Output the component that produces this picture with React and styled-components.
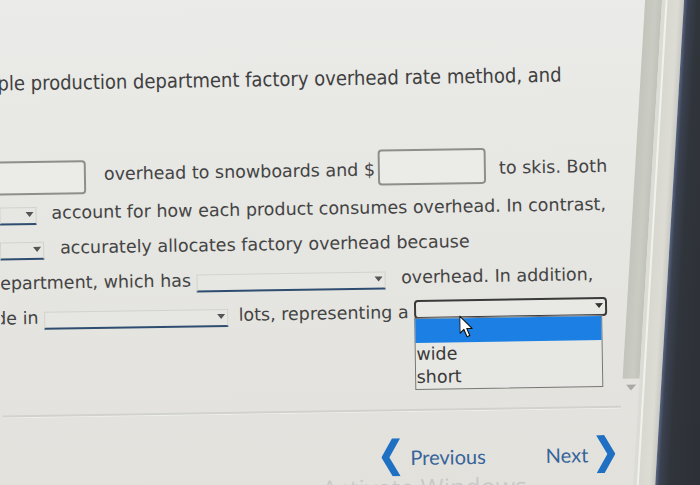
import styled, { createGlobalStyle } from "styled-components";

const GlobalStyle = createGlobalStyle`
  html, body {
    margin: 0;
    padding: 0;
    background: #e4e3df;
  }
  body {
    width: 700px;
    height: 485px;
    overflow: hidden;
  }
`;

const pageBg = "linear-gradient(180deg, #ebebe9 0%, #e6e6e2 45%, #e2e1dc 100%)";

const Viewport = styled.div`
  width: 700px;
  height: 485px;
  overflow: hidden;
`;

const Screen = styled.div`
  display: flex;
  width: 730px;
  height: 505px;
  margin: -10px 0 0 -10px;
  background: ${pageBg};
  transform: rotate(-0.9deg);
  transform-origin: 360px 252px;
`;

const Main = styled.div`
  display: flex;
  flex-direction: column;
  width: 642px;
  flex-shrink: 0;
  padding: 10px 0 0 10px;
  box-sizing: border-box;
  background: ${pageBg};
`;

const Content = styled.div`
  height: 410px;
  padding-top: 60px;
  box-sizing: border-box;
  overflow: hidden;
  font-family: "DejaVu Sans", Verdana, sans-serif;
  font-size: 17.5px;
  color: #444;
`;

const Lead = styled.div`
  height: 35px;
  display: flex;
  align-items: center;
  font-family: "DejaVu Sans Condensed", "DejaVu Sans", sans-serif;
  font-stretch: condensed;
  font-size: 20px;
  color: #404040;
  white-space: nowrap;
  margin-bottom: 54px;
`;

const Row = styled.div`
  height: ${(p) => p.$h || 35}px;
  display: flex;
  align-items: center;
  white-space: nowrap;
`;

const Text = styled.span`
  margin-left: ${(p) => p.$ml || 0}px;
`;

const Box = styled.div`
  width: ${(p) => p.$w}px;
  height: ${(p) => p.$ht}px;
  margin-left: ${(p) => p.$ml || 0}px;
  margin-top: ${(p) => p.$mt || 0}px;
  border: 2px solid #8e8e8c;
  border-radius: 4px;
  background: #ebebe8;
  box-sizing: border-box;
  flex-shrink: 0;
`;

const Select = styled.div`
  position: relative;
  width: ${(p) => p.$w}px;
  height: 18px;
  margin-left: ${(p) => p.$ml || 0}px;
  margin-top: 6px;
  border: 1px solid #d3d3ce;
  border-bottom: 2px solid #2f4d70;
  box-sizing: border-box;
  background: #e6e6e2;
  flex-shrink: 0;
`;

const Arrow = styled.span`
  position: absolute;
  right: 2px;
  top: 4px;
  width: 0;
  height: 0;
  border-left: 4px solid transparent;
  border-right: 4px solid transparent;
  border-top: 5px solid ${(p) => p.$c || "#555"};
`;

const OpenSelect = styled.div`
  position: relative;
  width: 193px;
  height: 19px;
  margin-left: 5px;
  margin-top: -4px;
  border: 2px solid #3a3a3a;
  border-radius: 4px;
  box-sizing: border-box;
  background: #e8e8e4;
  flex-shrink: 0;
`;

const ListBox = styled.div`
  position: absolute;
  top: 16px;
  left: -2px;
  width: 188px;
  height: 72px;
  border: 1px solid #777;
  box-sizing: border-box;
  background: #e7e7e3;
  z-index: 2;
`;

const Option = styled.div`
  height: ${(p) => (p.$active ? 24 : 23)}px;
  line-height: 23px;
  padding-left: 1px;
  background: ${(p) => (p.$active ? "#1b7fe3" : "transparent")};
  color: #3a3a3a;
  font-size: 17.5px;
`;

const Cursor = styled.svg`
  position: absolute;
  left: 43px;
  top: 14px;
  z-index: 3;
`;

const Divider = styled.div`
  height: 2px;
  background: #d2d2cd;
  border-bottom: 1px solid #efefec;
`;

const Footer = styled.div`
  position: relative;
  flex: 1;
  display: flex;
  align-items: flex-start;
  padding: 25px 0 0 378px;
  overflow: hidden;
`;

const NavButton = styled.div`
  display: flex;
  align-items: center;
  gap: ${(p) => p.$gap}px;
  height: 40px;
  margin-left: ${(p) => p.$ml || 0}px;
  font-family: Lato, "Open Sans", sans-serif;
  font-size: 20px;
  color: #37649a;
`;

const Watermark = styled.div`
  position: absolute;
  left: 318px;
  top: 58px;
  font-family: "Open Sans", sans-serif;
  font-size: 25px;
  color: rgba(110, 118, 128, 0.22);
  white-space: nowrap;
`;

const RightEdge = styled.div`
  display: flex;
  flex: 1;
  margin-left: -20px;
  transform: skewX(-4.3deg);
  transform-origin: 0 100%;
`;

const ScrollBar = styled.div`
  width: 17px;
  display: flex;
  flex-direction: column;
  background: ${pageBg};
`;

const Thumb = styled.div`
  height: 393px;
  background: linear-gradient(90deg, #c3c4bb, #cacbc3 60%, #c1c2b9);
`;

const DownArrow = styled.div`
  margin: 6px auto 0;
  width: 0;
  height: 0;
  border-left: 5px solid transparent;
  border-right: 5px solid transparent;
  border-top: 6px solid #a9aaa4;
`;

const Frame = styled.div`
  width: 22px;
  background: linear-gradient(90deg, #dcdcd6 0, #dcdcd6 3px, #f1f1ec 4px, #f1f1ec 5px, #d8d8d1 6px, #dcdcd5 16px, #c9c9c3 100%);
`;

const Bezel = styled.div`
  flex: 1;
  background: linear-gradient(90deg, #586583 0, #3b4250 4px, #30343b 14px, #2a2d32 100%);
`;

function Chevron({ dir }) {
  const pts =
    dir === "left"
      ? "19,0 8,19 19,38 11,38 0,19 11,0"
      : "0,0 8,0 19,19 8,38 0,38 11,19";
  return (
    <svg width="19" height="38" viewBox="0 0 19 38">
      <polygon points={pts} fill="#1f6fc2" />
    </svg>
  );
}

export default function App() {
  return (
    <Viewport>
      <GlobalStyle />
      <Screen>
        <Main>
          <Content>
            <Lead>ple production department factory overhead rate method, and</Lead>
            <Row $h={41}>
              <Box $w={92} $ht={34} $ml={-5} $mt={6} />
              <Text $ml={18}>overhead to snowboards and $</Text>
              <Box $w={108} $ht={36} $ml={3} $mt={-4} />
              <Text $ml={13}>to skis. Both</Text>
            </Row>
            <Row>
              <Select $w={37}>
                <Arrow />
              </Select>
              <Text $ml={15}>account for how each product consumes overhead. In contrast,</Text>
            </Row>
            <Row>
              <Select $w={44}>
                <Arrow />
              </Select>
              <Text $ml={16}>accurately allocates factory overhead because</Text>
            </Row>
            <Row>
              <Text $ml={-14}>Department, which has</Text>
              <Select $w={189} $ml={5}>
                <Arrow />
              </Select>
              <Text $ml={16}>overhead. In addition,</Text>
            </Row>
            <Row>
              <Text $ml={-6}>de in</Text>
              <Select $w={184} $ml={6}>
                <Arrow />
              </Select>
              <Text $ml={10}>lots, representing a</Text>
              <OpenSelect>
                <Arrow $c="#333" />
                <ListBox>
                  <Option $active />
                  <Option>wide</Option>
                  <Option>short</Option>
                </ListBox>
                <Cursor width="14" height="23" viewBox="0 0 13 21">
                  <path
                    d="M0.5 0.5 L0.5 16.5 L4.2 13 L7 19.8 L9.6 18.7 L6.9 12.2 L11.8 12.2 Z"
                    fill="#fff"
                    stroke="#111"
                    strokeWidth="1"
                    strokeLinejoin="round"
                  />
                </Cursor>
              </OpenSelect>
            </Row>
          </Content>
          <Divider />
          <Footer>
            <NavButton $gap={10}>
              <Chevron dir="left" />
              Previous
            </NavButton>
            <NavButton $gap={8} $ml={60}>
              Next
              <Chevron dir="right" />
            </NavButton>
            <Watermark>Activate Windows</Watermark>
          </Footer>
        </Main>
        <RightEdge>
          <ScrollBar>
            <Thumb />
            <DownArrow />
          </ScrollBar>
          <Frame />
          <Bezel />
        </RightEdge>
      </Screen>
    </Viewport>
  );
}
